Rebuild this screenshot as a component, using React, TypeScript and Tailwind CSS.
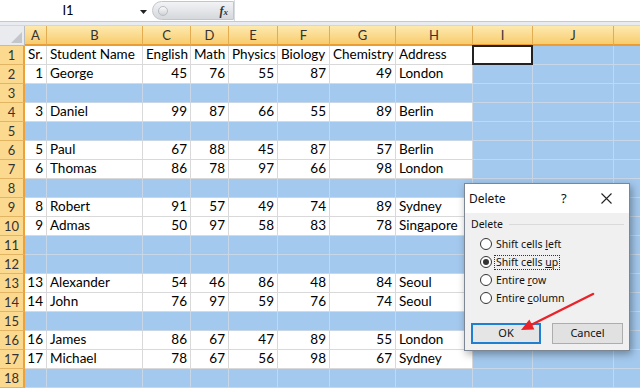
import React from "react";

type Val = string | number | null;
type Row = { n: number; v: Val[] | null };

const rows: Row[] = [
  { n: 1, v: ["Sr.", "Student Name", "English", "Math", "Physics", "Biology", "Chemistry", "Address"] },
  { n: 2, v: [1, "George", 45, 76, 55, 87, 49, "London"] },
  { n: 3, v: null },
  { n: 4, v: [3, "Daniel", 99, 87, 66, 55, 89, "Berlin"] },
  { n: 5, v: null },
  { n: 6, v: [5, "Paul", 67, 88, 45, 87, 57, "Berlin"] },
  { n: 7, v: [6, "Thomas", 86, 78, 97, 66, 98, "London"] },
  { n: 8, v: null },
  { n: 9, v: [8, "Robert", 91, 57, 49, 74, 89, "Sydney"] },
  { n: 10, v: [9, "Admas", 50, 97, 58, 83, 78, "Singapore"] },
  { n: 11, v: null },
  { n: 12, v: null },
  { n: 13, v: [13, "Alexander", 54, 46, 86, 48, 84, "Seoul"] },
  { n: 14, v: [14, "John", 76, 97, 59, 76, 74, "Seoul"] },
  { n: 15, v: null },
  { n: 16, v: [16, "James", 86, 67, 47, 89, 55, "London"] },
  { n: 17, v: [17, "Michael", 78, 67, 56, 98, 67, "Sydney"] },
  { n: 18, v: null },
];

const letters = ["A", "B", "C", "D", "E", "F", "G", "H", "I", "J", ""];

const gridCls =
  "grid w-[674px] grid-cols-[25px_22px_96px_48px_38px_49px_52px_66px_77px_60px_81px_60px]";

function Cell({ row, col }: { row: Row; col: number }) {
  const isActive = row.n === 1 && col === 8;
  if (isActive) {
    return <div className="bg-white border-2 border-[#222] -ml-px -mt-px h-[20px] w-[61px]" />;
  }
  const blue = col >= 8 || row.v === null;
  const val: Val = row.v && col < 8 ? row.v[col] : null;
  const isNum = typeof val === "number";
  return (
    <div
      className={
        "h-[19px] flex items-center overflow-hidden whitespace-nowrap border-r border-b px-[3px] " +
        (blue ? "bg-[#a4c9ee] border-[#c7d7e8] " : "bg-white border-[#d9d9d9] ") +
        (isNum ? "justify-end" : "justify-start")
      }
    >
      {val !== null ? <span className="leading-none">{val}</span> : null}
    </div>
  );
}

export default function App() {
  return (
    <div className="relative w-[640px] h-[388px] overflow-hidden bg-white font-['Lato',sans-serif] text-[13.5px] text-black">
      {/* Formula bar */}
      <div className="h-[22px] flex bg-white border-b border-[#c3c9d1]">
        <div className="w-[152px] flex items-center relative">
          <span className="w-[136px] text-center text-[13px] leading-none">I1</span>
          <svg className="absolute left-[140px] top-[10px]" width="7" height="4" viewBox="0 0 7 4">
            <polygon points="0,0 7,0 3.5,4" fill="#222" />
          </svg>
        </div>
        <div className="w-[82px] h-[19px] mt-[1px] rounded-l-full bg-gradient-to-b from-[#f2f3f5] to-[#d5d8dc] border border-[#c2c6cc] flex items-center justify-between pl-[5px] pr-[5px]">
          <div className="w-[10px] h-[10px] rounded-full bg-gradient-to-b from-[#fafafa] to-[#cfd2d6] border border-[#b9bdc3]" />
          <span className="font-['Liberation_Serif',serif] italic font-bold text-[12px] leading-none text-[#333]">
            f<span className="text-[9px]">x</span>
          </span>
        </div>
        <div className="flex-1 border-l border-[#d6dbe1]" />
      </div>
      <div className="h-[4px] bg-[#e8ebef] border-b border-[#d3d7dc]" />

      {/* Column headers */}
      <div className={gridCls}>
        <div className="h-[20px] relative bg-[#e9ebee] border-r border-b border-[#b8bdc4]">
          <svg className="absolute right-[2px] bottom-[2px]" width="11" height="11" viewBox="0 0 11 11">
            <polygon points="11,0 11,11 0,11" fill="#c3c6ca" />
          </svg>
        </div>
        {letters.map((l, i) => (
          <div
            key={i}
            className="h-[20px] flex items-center justify-center bg-gradient-to-b from-[#fde9ae] to-[#f8cc6e] border-r border-[#e2ad52] border-b-2 border-b-[#eb9d34] text-[13px] text-[#333] leading-none"
          >
            {l}
          </div>
        ))}
      </div>

      {/* Rows */}
      {rows.map((r) => (
        <div key={r.n} className={gridCls}>
          <div className="h-[19px] flex items-center justify-center bg-[#fbd98f] border-b border-[#e3b462] border-r-2 border-r-[#eca23c] text-[13px] text-[#333] leading-none">
            {r.n}
          </div>
          {letters.map((_, c) => (
            <Cell key={c} row={r} col={c} />
          ))}
        </div>
      ))}

      {/* Delete dialog */}
      <div className="absolute left-[464px] top-[183px] w-[166px] h-[168px] border border-[#7d8794] bg-[#f0f0f0] shadow-[2px_3px_8px_rgba(0,0,0,0.35)] font-['Noto_Sans',sans-serif] text-[#111]">
        <div className="h-[29px] bg-white flex items-center pl-[4px] relative">
          <span className="text-[12px] leading-none">Delete</span>
          <span className="absolute left-[96px] top-[8px] text-[13px] leading-none">?</span>
          <svg className="absolute left-[136px] top-[9px]" width="11" height="11" viewBox="0 0 11 11">
            <path d="M0.5 0.5 L10.5 10.5 M10.5 0.5 L0.5 10.5" stroke="#222" strokeWidth="1.1" />
          </svg>
        </div>
        <div className="mt-[4px] h-[14px] flex items-center pl-[6px]">
          <span className="text-[10.5px] leading-none">Delete</span>
          <div className="flex-1 h-px bg-[#dadada] ml-[6px] mr-[5px]" />
        </div>
        <div className="mt-[4px] flex flex-col text-[10.5px]">
          {[
            { pre: "Shift cells ", u: "l", post: "eft", sel: false },
            { pre: "Shift cells ", u: "u", post: "p", sel: true },
            { pre: "Entire ", u: "r", post: "ow", sel: false },
            { pre: "Entire ", u: "c", post: "olumn", sel: false },
          ].map((o, i) => (
            <div key={i} className="h-[18px] flex items-center pl-[15px]">
              <div className="w-[12px] h-[12px] rounded-full border border-[#333] bg-white flex items-center justify-center">
                {o.sel ? <div className="w-[6px] h-[6px] rounded-full bg-[#333]" /> : null}
              </div>
              <span
                className={
                  "ml-[3px] px-[1px] leading-[13px] " +
                  (o.sel ? "outline outline-1 outline-dotted outline-[#333]" : "")
                }
              >
                {o.pre}
                <span className="underline">{o.u}</span>
                {o.post}
              </span>
            </div>
          ))}
        </div>
        <div className="mt-[16px] flex pl-[6px] gap-[11px] text-[11px]">
          <div className="w-[70px] h-[21px] flex items-center justify-center bg-[#e5e5e5] border border-[#1f7fd0] shadow-[inset_0_0_0_1px_#1f7fd0]">
            OK
          </div>
          <div className="w-[71px] h-[21px] flex items-center justify-center bg-[#e1e1e1] border border-[#adadad]">
            Cancel
          </div>
        </div>
      </div>

      {/* Red arrow */}
      <svg className="absolute left-0 top-0 pointer-events-none" width="640" height="388" viewBox="0 0 640 388">
        <line x1="593" y1="294" x2="531" y2="325" stroke="#e8232a" strokeWidth="2.5" strokeLinecap="round" />
        <polygon points="521,330 529.4,319.6 534.4,329.6" fill="#e8232a" />
      </svg>
    </div>
  );
}
